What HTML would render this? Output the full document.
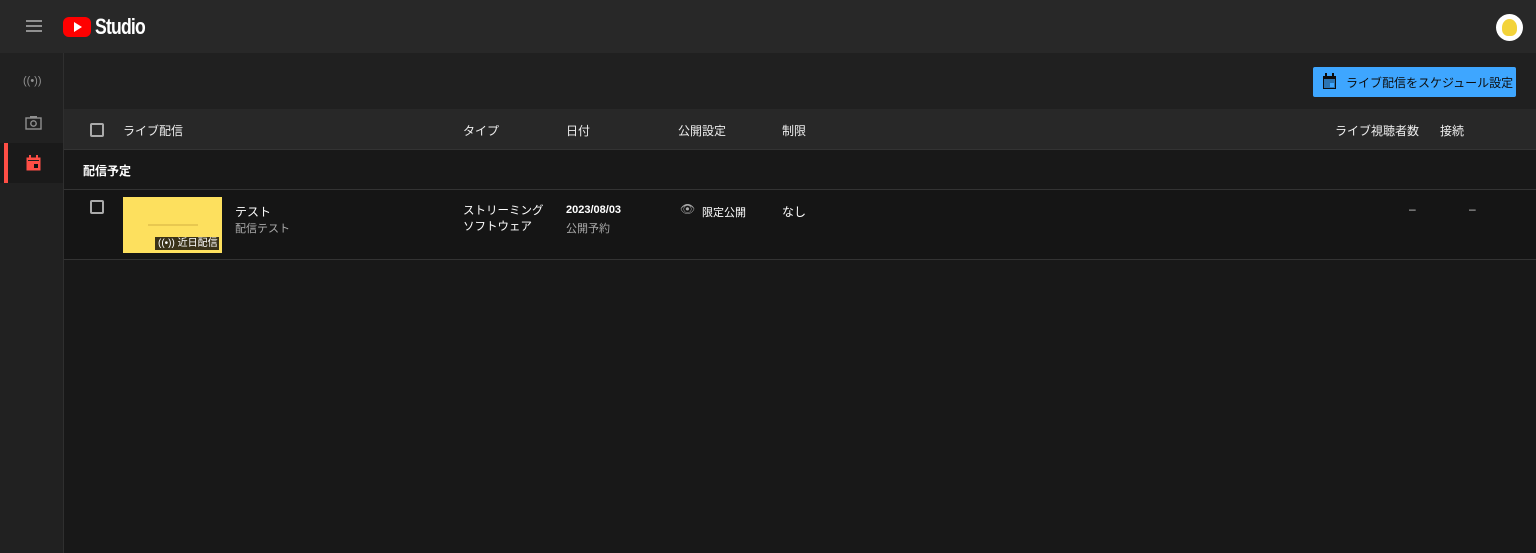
<!DOCTYPE html>
<html><head><meta charset="utf-8"><style>
*{margin:0;padding:0;box-sizing:border-box}
body{width:1536px;height:553px;background:#181818;font-family:"Liberation Sans","Noto Sans CJK JP",sans-serif;color:#fff;position:relative;overflow:hidden}
.hdr{position:absolute;left:0;top:0;width:1536px;height:53px;background:#282828}
.side{position:absolute;left:0;top:53px;width:64px;height:500px;background:#212121;border-right:1px solid #2f2f2f}
.main{position:absolute;left:64px;top:53px;right:0;bottom:0;background:#181818}
.tb{position:absolute;left:64px;top:53px;right:0;height:56px;background:#202020}
.th{position:absolute;left:64px;top:109px;right:0;height:41px;background:#282828;border-bottom:1px solid #333;font-size:12px;color:#eee}
.t{position:absolute;white-space:nowrap}
.cb{position:absolute;width:14px;height:14px;border:2px solid #aaa;border-radius:2px}
.line{position:absolute;left:64px;right:0;height:1px;background:#333}
</style></head><body>
<div class="hdr">
<div style="position:absolute;left:26px;top:20px;width:16px;height:2px;background:#909090;box-shadow:0 5px 0 #909090,0 10px 0 #909090"></div>
<div style="position:absolute;left:63px;top:17px;width:28px;height:20px;background:#f00;border-radius:6px"></div>
<div style="position:absolute;left:74px;top:22px;width:0;height:0;border-left:8px solid #fff;border-top:5px solid transparent;border-bottom:5px solid transparent"></div>
<div class="t" style="left:95px;top:14px;font-size:22px;font-weight:bold;letter-spacing:-1px;transform:scaleX(.8);transform-origin:left">Studio</div>
<div style="position:absolute;left:1496px;top:14px;width:27px;height:27px;border-radius:50%;background:#fff"><div style="position:absolute;left:6px;top:5px;width:15px;height:17px;background:#f3d33a;border-radius:50% 50% 40% 40%"></div></div>
</div>
<div class="side">
<div class="t" style="left:23px;top:22px;font-size:11px;color:#909090">((•))</div>
<svg style="position:absolute;left:25px;top:62px" width="17" height="15" viewBox="0 0 17 15"><rect x="1" y="3" width="15" height="11" fill="none" stroke="#909090" stroke-width="1.4"/><rect x="5" y="1" width="7" height="2" fill="#909090"/><circle cx="8.5" cy="8.5" r="2.7" fill="none" stroke="#909090" stroke-width="1.4"/></svg>
<div style="position:absolute;left:0;top:90px;width:63px;height:40px;background:#1a1a1a"></div>
<div style="position:absolute;left:4px;top:90px;width:4px;height:40px;background:#ff4e45"></div>
<svg style="position:absolute;left:26px;top:102px" width="15" height="16" viewBox="0 0 15 16"><rect x="1" y="3" width="13" height="12" fill="#ff4e45" stroke="#ff4e45"/><rect x="3" y="0" width="2" height="3" fill="#ff4e45"/><rect x="10" y="0" width="2" height="3" fill="#ff4e45"/><rect x="2" y="5" width="11" height="1" fill="#212121"/><rect x="8" y="9" width="4" height="4" fill="#111"/></svg>
</div>
<div class="main"></div>
<div class="tb"></div>
<div style="position:absolute;left:1313px;top:67px;width:203px;height:30px;background:#3ea6ff;border-radius:2px">
<svg style="position:absolute;left:9px;top:6px" width="15" height="17" viewBox="0 0 15 17"><rect x="1" y="3" width="13" height="13" fill="#0d0d0d"/><rect x="3" y="0" width="2" height="3" fill="#0d0d0d"/><rect x="10" y="0" width="2" height="3" fill="#0d0d0d"/><rect x="2" y="6" width="11" height="9" fill="#2b74b3"/><rect x="8" y="10" width="4" height="4" fill="#3ea6ff"/></svg>
<div class="t" style="left:33px;top:7px;font-size:12px;color:#0d0d0d">ライブ配信をスケジュール設定</div>
</div>
<div class="th">
<div class="cb" style="left:26px;top:14px"></div>
<div class="t" style="left:59px;top:13px">ライブ配信</div>
<div class="t" style="left:399px;top:13px">タイプ</div>
<div class="t" style="left:502px;top:13px">日付</div>
<div class="t" style="left:614px;top:13px">公開設定</div>
<div class="t" style="left:718px;top:13px">制限</div>
<div class="t" style="left:1271px;top:13px">ライブ視聴者数</div>
<div class="t" style="left:1376px;top:13px">接続</div>
</div>
<div class="t" style="left:83px;top:162px;font-size:12px;font-weight:bold">配信予定</div>
<div class="line" style="top:189px"></div>
<div style="position:absolute;left:64px;top:190px;right:0;height:69px;background:#151515"></div>
<div class="cb" style="left:90px;top:200px"></div>
<div style="position:absolute;left:123px;top:197px;width:99px;height:56px;background:#fde05e">
<div style="position:absolute;left:25px;top:27px;width:50px;height:2px;background:#e8c850"></div>
<div style="position:absolute;left:32px;top:40px;width:64px;height:13px;background:#3a3218;font-size:10px;color:#fff;white-space:nowrap;padding-left:3px;line-height:13px">((•)) 近日配信</div>
</div>
<div class="t" style="left:235px;top:203px;font-size:12px">テスト</div>
<div class="t" style="left:235px;top:220px;font-size:11px;color:#aaa">配信テスト</div>
<div class="t" style="left:463px;top:203px;font-size:11.5px;line-height:16px">ストリーミング<br>ソフトウェア</div>
<div class="t" style="left:566px;top:204px;font-size:11px;font-weight:bold">2023/08/03</div>
<div class="t" style="left:566px;top:220px;font-size:11px;color:#aaa">公開予約</div>
<div class="t" style="left:680px;top:202px;font-size:12px;color:#aaa">👁</div>
<div class="t" style="left:702px;top:204px;font-size:11px">限定公開</div>
<div class="t" style="left:782px;top:203px;font-size:12px">なし</div>
<div class="t" style="left:1409px;top:202px;font-size:12px;color:#ccc">–</div>
<div class="t" style="left:1469px;top:202px;font-size:12px;color:#ccc">–</div>
<div class="line" style="top:259px"></div>
</body></html>
